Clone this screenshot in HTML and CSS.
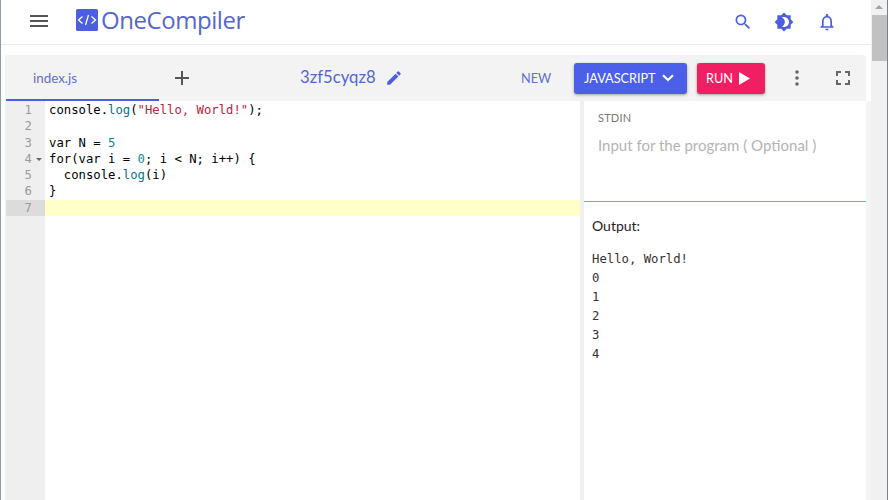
FILE: index.html
```html
<!DOCTYPE html>
<html lang="en">
<head>
<meta charset="utf-8">
<title>OneCompiler</title>
<link rel="stylesheet" href="styles.css">
</head>
<body>
<div class="window">
  <div class="page">
    <header class="topbar">
      <svg class="menu-icon" viewBox="0 0 18 12"><path d="M0 0h18v2H0zM0 5h18v2H0zM0 10h18v2H0z"/></svg>
      <svg class="logo-icon" viewBox="0 0 22 22"><rect width="22" height="22" rx="1.5" fill="#4c5fe0"/><path d="M6.5 7.5 2.5 11l4 3.500M15.500 7.500l4 3.500-4 3.500M12.500 6l-3 10" fill="none" stroke="#fff" stroke-width="1.300"/></svg>
      <span class="logo-text">OneCompiler</span>
      <span class="spacer"></span>
      <svg class="top-icon top-search" viewBox="0 0 24 24"><path d="M15.500 14h-.79l-.28-.27A6.470 6.470 0 0 0 16 9.500 6.500 6.500 0 1 0 9.500 16c1.610 0 3.090-.59 4.230-1.570l.27.28v.79l5 4.990L20.490 19l-4.990-5zm-6 0C7.010 14 5 11.990 5 9.500S7.010 5 9.500 5 14 7.010 14 9.500 11.990 14 9.500 14z"/></svg>
      <svg class="top-icon" viewBox="0 0 24 24"><path d="M20 8.690V4h-4.690L12 .69 8.690 4H4v4.690L.69 12 4 15.310V20h4.690L12 23.310 15.310 20H20v-4.690L23.310 12 20 8.690zM12 18c-.89 0-1.740-.2-2.500-.55C11.560 16.500 13 14.420 13 12s-1.440-4.500-3.500-5.450C10.260 6.200 11.110 6 12 6c3.310 0 6 2.690 6 6s-2.690 6-6 6z"/></svg>
      <svg class="top-icon" viewBox="0 0 24 24"><path d="M12 22c1.100 0 2-.9 2-2h-4c0 1.100.9 2 2 2zm6-6v-5c0-3.070-1.630-5.640-4.500-6.320V4c0-.83-.67-1.500-1.500-1.500s-1.500.67-1.500 1.500v.68C7.640 5.360 6 7.920 6 11v5l-2 2v1h16v-1l-2-2zm-2 1H8v-6c0-2.480 1.510-4.500 4-4.500s4 2.020 4 4.500v6z"/></svg>
    </header>
    <main class="card">
      <div class="toolbar">
        <div class="tab">index.js</div>
        <svg class="plus" viewBox="0 0 14 14"><path d="M6 0h2v6h6v2H8v6H6V8H0V6h6z"/></svg>
        <div class="title">
          <span>3zf5cyqz8</span>
          <svg class="pencil" viewBox="0 0 24 24"><path d="M3 17.250V21h3.750L17.810 9.940l-3.750-3.750L3 17.250zM20.710 7.040a1 1 0 0 0 0-1.410l-2.340-2.340a1 1 0 0 0-1.410 0l-1.830 1.830 3.750 3.750 1.830-1.830z"/></svg>
        </div>
        <span class="new">NEW</span>
        <button class="btn btn-lang">JAVASCRIPT
          <svg class="chev" viewBox="0 0 12 8"><path d="M1 1.200 6 6l5-4.800" fill="none" stroke="#fff" stroke-width="2"/></svg>
        </button>
        <button class="btn btn-run">RUN
          <svg class="play" viewBox="0 0 11 13"><path d="M0 0v13l11-6.500z"/></svg>
        </button>
        <svg class="dots" viewBox="0 0 4 16"><circle cx="2" cy="2" r="1.800"/><circle cx="2" cy="8" r="1.800"/><circle cx="2" cy="14" r="1.800"/></svg>
        <svg class="expand" viewBox="0 0 14 14"><path d="M0 5V0h5v2H2v3zM9 0h5v5h-2V2H9zM12 9h2v5H9v-2h3zM0 9h2v3h3v2H0z"/></svg>
      </div>
      <div class="workspace">
        <section class="editor">
          <div class="gutter">
            <div class="ln">1</div>
            <div class="ln">2</div>
            <div class="ln">3</div>
            <div class="ln fold">4</div>
            <div class="ln">5</div>
            <div class="ln">6</div>
            <div class="ln ln-active">7</div>
          </div>
          <div class="code">
            <div class="cl">console.<span class="fn">log</span>(<span class="str">"Hello, World!"</span>);</div>
            <div class="cl"></div>
            <div class="cl">var N = <span class="num">5</span></div>
            <div class="cl">for(var i = <span class="num">0</span>; i &lt; N; i++) {</div>
            <div class="cl">  console.<span class="fn">log</span>(i)</div>
            <div class="cl">}</div>
            <div class="cl cl-active"></div>
          </div>
        </section>
        <div class="divider"></div>
        <section class="side">
          <div class="stdin">
            <div class="stdin-label">STDIN</div>
            <div class="stdin-ph">Input for the program ( Optional )</div>
          </div>
          <div class="rule"></div>
          <div class="output">
            <div class="out-label">Output:</div>
            <div class="out-line">Hello, World!</div>
            <div class="out-line">0</div>
            <div class="out-line">1</div>
            <div class="out-line">2</div>
            <div class="out-line">3</div>
            <div class="out-line">4</div>
          </div>
        </section>
      </div>
    </main>
  </div>
  <div class="scrollbar">
    <div class="arrow"></div>
    <div class="thumb"></div>
  </div>
</div>
</body>
</html>
```
FILE: styles.css
```css
* { box-sizing: border-box; }
html, body { margin: 0; height: 100%; overflow: hidden; background: #fff; }
body { font-family: Lato, "Open Sans", sans-serif; }

.window {
  display: flex;
  height: 500px;
  width: 888px;
  border-left: 1px solid #8f9ca6;
  border-right: 1px solid #76838c;
}
.page { flex: 1; min-width: 0; display: flex; flex-direction: column; }

.topbar {
  display: flex;
  align-items: center;
  height: 45px;
  flex: none;
  border-bottom: 1px solid #e9e9ec;
  padding: 0 34px 2px 29px;
}
.menu-icon { width: 18px; height: 12px; fill: #555; margin-right: 28px; }
.logo-icon { width: 22px; height: 22px; margin-right: 3px; margin-top: -2px; }
.logo-text { font-family: "Open Sans", sans-serif; font-size: 24px; letter-spacing: -0.45px; color: #5567cf; margin-top: -3px; }
.spacer { flex: 1; }
.top-icon { width: 20px; height: 20px; fill: #4c5fe0; margin-left: 23px; margin-top: 1px; }
.top-search { margin-right: -2px; }

.card {
  flex: 1;
  min-height: 0;
  margin: 10px 5px 0 4px;
  display: flex;
  flex-direction: column;
  background: #f3f3f4;
  border-radius: 3px 3px 0 0;
}
.toolbar {
  display: flex;
  align-items: center;
  height: 46px;
  flex: none;
}
.tab {
  width: 153px;
  height: 46px;
  margin-left: 1px;
  padding: 15px 0 0 27px;
  font-size: 13.400px;
  color: #5f70d6;
  border-bottom: 2px solid #4c5fe0;
}
.plus { width: 14px; height: 14px; fill: #555; margin-left: 16px; }
.title {
  display: flex;
  align-items: center;
  margin-left: 111px;
  width: 221px;
  font-size: 16.700px;
  color: #5567cf;
  margin-top: -3px;
}
.pencil { width: 18px; height: 18px; fill: #4c5fe0; margin-left: 9px; margin-top: 2px; }
.new { font-size: 12.700px; color: #5f70d6; width: 53px; }
.btn {
  display: flex;
  align-items: center;
  height: 31px;
  border: 0;
  border-radius: 3px;
  color: #fff;
  font-family: inherit;
  font-size: 12.700px;
  padding: 0;
  box-shadow: 0 1px 3px rgba(0, 0, 0, .35);
}
.btn-lang { width: 113px; background: #4c5fe8; margin-right: 10px; padding-left: 10px; }
.btn-run { width: 68px; background: #f01e63; margin-right: 30px; padding-left: 9px; }
.chev { width: 12px; height: 8px; margin-left: 6px; }
.play { width: 11px; height: 13px; fill: #fff; margin-left: 6px; }
.dots { width: 4px; height: 16px; fill: #666; margin-right: 37px; }
.expand { width: 14px; height: 14px; fill: #666; }

.workspace { flex: 1; min-height: 0; display: flex; }
.editor { width: 574px; margin-left: 1px; background: #fff; display: flex; flex: none; font-family: "DejaVu Sans Mono", monospace; font-size: 12.250px; }
.gutter { width: 39px; background: #efefef; flex: none; color: #9a9a9a; padding-top: 1px; }
.ln { height: 16.300px; line-height: 16.300px; text-align: right; padding-right: 13px; position: relative; }
.fold::after {
  content: "";
  position: absolute;
  right: 3px;
  top: 7px;
  border-left: 3px solid transparent;
  border-right: 3px solid transparent;
  border-top: 3px solid #666;
}
.ln-active { background: #dcdcdc; }
.code { flex: 1; padding-top: 1px; color: #000; }
.cl { height: 16.300px; line-height: 16.300px; padding-left: 4px; white-space: pre; }
.cl-active { background: #ffffc9; }
.fn { color: #0b7285; }
.str { color: #c41a3f; }
.num { color: #0b8a92; }

.divider { width: 4px; flex: none; background: #f0f0f1; }
.side { width: 282px; flex: none; background: #fff; display: flex; flex-direction: column; box-shadow: 5px 0 0 #f4f4f7; }
.stdin { height: 100px; flex: none; padding: 10px 14px 0; }
.stdin-label { font-size: 11px; color: #777; letter-spacing: .2px; }
.stdin-ph { font-size: 15px; color: #b4b4b4; margin-top: 12px; }
.rule { height: 1px; flex: none; background: #3ecf8e; }
.output { padding: 15px 8px 0; }
.out-label { font-size: 14px; color: #222; margin-bottom: 16px; }
.out-line { font-family: "DejaVu Sans Mono", monospace; font-size: 12.250px; line-height: 19px; color: #333; }

.scrollbar { width: 16px; flex: none; background: #f1f1f1; }
.arrow { height: 15px; position: relative; }
.arrow::after {
  content: "";
  position: absolute;
  left: 4px;
  top: 5px;
  border-left: 4px solid transparent;
  border-right: 4px solid transparent;
  border-bottom: 4px solid #a3a3a3;
}
.thumb { height: 46px; margin-left: 1px; background: #c1c1c1; }
```
